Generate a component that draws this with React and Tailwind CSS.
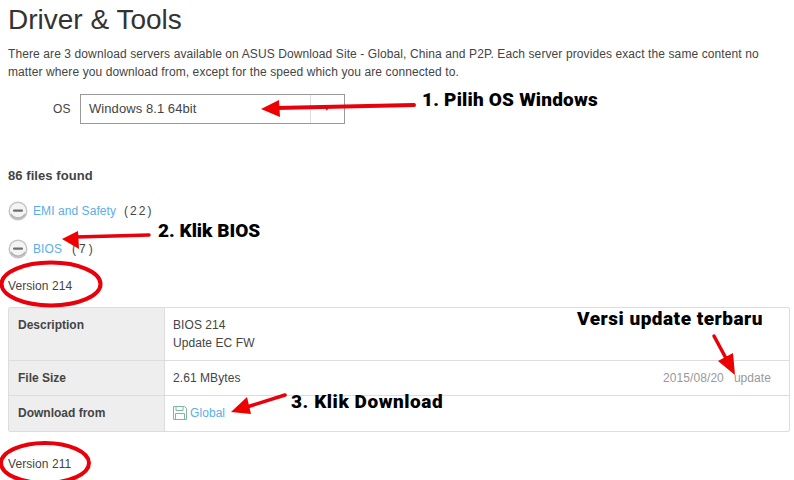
const sans = "font-['Liberation_Sans',Arial,sans-serif]";
const note = "absolute font-['Roboto',sans-serif] font-black text-[19px] leading-[20px] text-black whitespace-nowrap";

function MinusIcon() {
  return (
    <svg width="20" height="20" viewBox="0 0 20 20" className="shrink-0">
      <circle cx="10" cy="10" r="8.8" fill="#f4f4f4" stroke="#c4c4c4" strokeWidth="1.4" />
      <path d="M3 13a8 8 0 0 0 14 0" fill="none" stroke="#b5b5b5" strokeWidth="1.6" />
      <rect x="5" y="8.6" width="10" height="2.2" rx="1" fill="#6f6f6f" />
    </svg>
  );
}

function SaveIcon() {
  return (
    <svg width="14" height="14" viewBox="0 0 14 14" fill="none" stroke="#7fb8a0" strokeWidth="1">
      <path d="M.5.5h11l2 2v11H.5z" />
      <path d="M3 .5v4h7v-4M2.5 13.5v-6h9v6" />
    </svg>
  );
}

function Annotations() {
  return (
    <svg width="794" height="480" className="absolute left-0 top-0" fill="none">
      <g stroke="#e8000b" strokeLinecap="round">
        <path d="M276 108L414 105" strokeWidth="4" />
        <path d="M76 237L149 235" strokeWidth="3.5" />
        <path d="M247 407L285 395" strokeWidth="3.5" />
        <path d="M714 336L728 362" strokeWidth="3.5" />
        <ellipse cx="51" cy="284" rx="49.5" ry="21.5" strokeWidth="4" />
        <ellipse cx="45" cy="463" rx="44" ry="20" strokeWidth="4" />
      </g>
      <g fill="#ee0000">
        <path d="M261 109L279 100L280 117Z" />
        <path d="M62 239L78 231L79 249Z" />
        <path d="M231 412L247 397L251 414Z" />
        <path d="M735 375L718 361L733 353Z" />
      </g>
    </svg>
  );
}

export default function App() {
  return (
    <div className={`relative h-[480px] w-[794px] overflow-hidden bg-white pl-2 tracking-[0.07px] text-[#444] ${sans}`}>
      <h1 className="h-[39px] text-[28px] leading-[39px] tracking-normal text-[#333]">Driver &amp; Tools</h1>

      <p className="mt-[6px] w-[770px] text-[12px] leading-[18px] tracking-[0.1px]">
        There are 3 download servers available on ASUS Download Site - Global, China and P2P. Each server provides exact the same content no
        matter where you download from, except for the speed which you are connected to.
      </p>

      <div className="mt-[13px] flex items-center">
        <span className="ml-[45px] w-[27px] text-[12px]">OS</span>
        <div className="flex h-[30px] w-[265px] items-center border border-[#999] text-[13px]">
          <span className="flex-1 pl-2">Windows 8.1 64bit</span>
          <span className="flex h-full w-[34px] items-center justify-center border-l border-[#ddd] text-[7px]">▾</span>
        </div>
      </div>

      <p className="mt-[44px] text-[13px] font-bold leading-[15px]">86 files found</p>

      <div className="mt-[18px] flex h-5 items-center gap-[5px] text-[12px]">
        <MinusIcon />
        <span className="text-[#5aaee6]">EMI and Safety</span>
        <span className="ml-[3px] tracking-[2px]">(22)</span>
      </div>

      <div className="mt-[18px] flex h-5 items-center gap-[5px] text-[12px]">
        <MinusIcon />
        <span className="text-[#5aaee6]">BIOS</span>
        <span className="ml-[5px] tracking-[3px]">(7)</span>
      </div>

      <p className="mt-[20px] text-[12px] leading-[14px]">Version 214</p>

      <div className="mt-[14px] w-[782px] rounded-[2px] border border-[#ddd] text-[12px]">
        <div className="flex h-[53px] border-b border-[#ddd]">
          <div className="w-[156px] border-r border-[#ddd] bg-[#eee] pl-[9px] pt-[8px] font-bold tracking-normal">Description</div>
          <div className="flex-1 pl-[8px] pt-[8px] leading-[18px]">
            <p>BIOS 214</p>
            <p>Update EC FW</p>
          </div>
        </div>
        <div className="flex h-[35px] border-b border-[#ddd]">
          <div className="flex w-[156px] items-center border-r border-[#ddd] bg-[#eee] pl-[9px] font-bold tracking-normal">File Size</div>
          <div className="flex flex-1 items-center justify-between pl-[8px] pr-[18px]">
            <span>2.61 MBytes</span>
            <span className="text-[#999]">
              2015/08/20<span className="ml-[10px]">update</span>
            </span>
          </div>
        </div>
        <div className="flex h-[35px]">
          <div className="flex w-[156px] items-center border-r border-[#ddd] bg-[#eee] pb-[2px] pl-[9px] font-bold tracking-normal">Download from</div>
          <div className="flex flex-1 items-center gap-[3px] pb-[2px] pl-[8px] text-[#5aaee6]">
            <SaveIcon />
            <span>Global</span>
          </div>
        </div>
      </div>

      <p className="mt-[25px] text-[12px] leading-[14px]">Version 211</p>

      <Annotations />
      <span className={`${note} left-[422px] top-[90px] tracking-[0.2px]`}>1. Pilih OS Windows</span>
      <span className={`${note} left-[158px] top-[221px] tracking-normal`}>2. Klik BIOS</span>
      <span className={`${note} left-[291px] top-[392px] tracking-[0.55px]`}>3. Klik Download</span>
      <span className={`${note} left-[577px] top-[309px] tracking-[0.5px]`}>Versi update terbaru</span>
    </div>
  );
}
